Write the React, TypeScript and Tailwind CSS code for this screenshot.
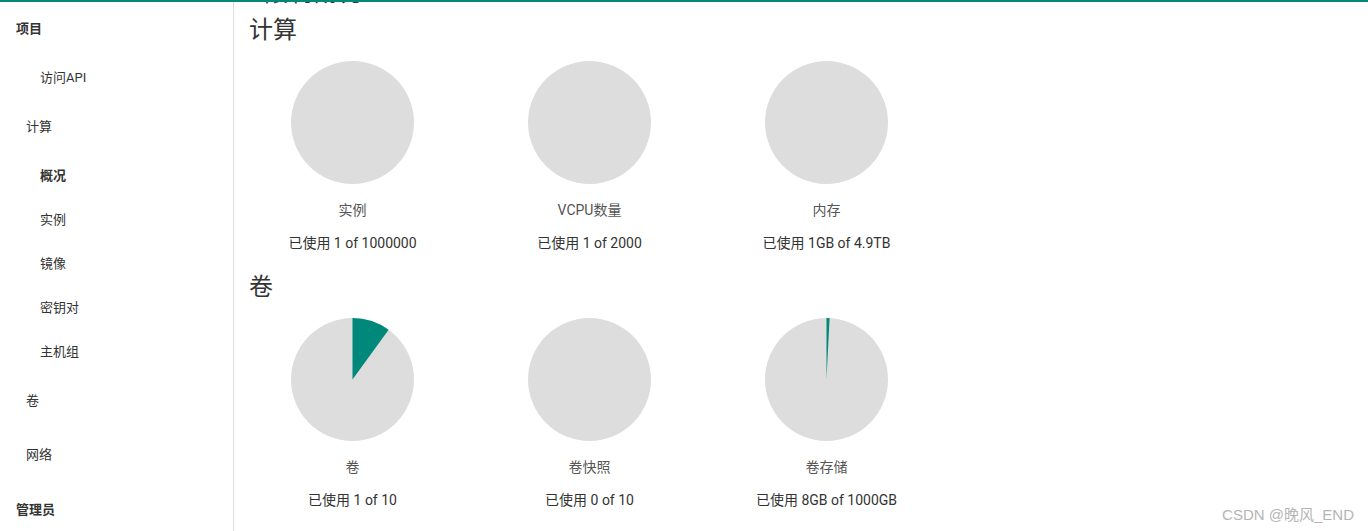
import React from 'react';

type Limit = { label: string; used: number; total: number; text: string };

const compute: Limit[] = [
  { label: '实例', used: 1, total: 1000000, text: '已使用 1 of 1000000' },
  { label: 'VCPU数量', used: 1, total: 2000, text: '已使用 1 of 2000' },
  { label: '内存', used: 1, total: 5017, text: '已使用 1GB of 4.9TB' },
];

const volume: Limit[] = [
  { label: '卷', used: 1, total: 10, text: '已使用 1 of 10' },
  { label: '卷快照', used: 0, total: 10, text: '已使用 0 of 10' },
  { label: '卷存储', used: 8, total: 1000, text: '已使用 8GB of 1000GB' },
];

// tiny usages are not drawn, like the original chart
function Pie({ used, total }: { used: number; total: number }) {
  const r = 61.5;
  const c = 61.5;
  const frac = used / total;
  let wedge: React.ReactNode = null;
  if (frac > 0.001) {
    const a = frac * 2 * Math.PI;
    const x = c + r * Math.sin(a);
    const y = c - r * Math.cos(a);
    const large = frac > 0.5 ? 1 : 0;
    wedge = <path d={`M${c} ${c} L${c} ${c - r} A${r} ${r} 0 ${large} 1 ${x} ${y} Z`} fill="#00897b" />;
  }
  return (
    <svg width="123" height="123" viewBox="0 0 123 123">
      <circle cx={c} cy={c} r={r} fill="#dddddd" />
      {wedge}
    </svg>
  );
}

function Section({ title, items, first }: { title: string; items: Limit[]; first?: boolean }) {
  return (
    <div className={first ? 'mt-[11px]' : 'mt-[23px]'}>
      <h3 className="pl-[15px] text-[24px] leading-[24px] text-[#333]">{title}</h3>
      <div className="grid grid-cols-[237px_237px_237px] mt-[19px]">
        {items.map((it) => (
          <div key={it.label} className="flex flex-col items-center">
            <Pie used={it.used} total={it.total} />
            <div className="mt-[17px] text-[14px] leading-[18px] text-[#555]">{it.label}</div>
            <div className="mt-[15px] text-[14px] leading-[18px] text-[#333]">{it.text}</div>
          </div>
        ))}
      </div>
    </div>
  );
}

const nav = [
  { label: '项目', h: 54, pl: 16, bold: true },
  { label: '访问API', h: 44, pl: 40 },
  { label: '计算', h: 54, pl: 26 },
  { label: '概况', h: 44, pl: 40, bold: true },
  { label: '实例', h: 44, pl: 40 },
  { label: '镜像', h: 44, pl: 40 },
  { label: '密钥对', h: 44, pl: 40 },
  { label: '主机组', h: 44, pl: 40 },
  { label: '卷', h: 54, pl: 26 },
  { label: '网络', h: 54, pl: 26 },
  { label: '管理员', h: 56, pl: 16, bold: true },
];

export default function App() {
  return (
    <div
      className="relative w-[1368px] h-[531px] overflow-hidden bg-white border-t-2 border-[#00897b]"
      style={{ fontFamily: 'Roboto, "Noto Sans CJK SC", sans-serif' }}
    >
      <div className="flex h-full">
        <aside className="w-[234px] shrink-0 border-r border-[#dddddd] text-[13px] text-[#333]">
          {nav.map((n) => (
            <div
              key={n.label}
              className={`flex items-center ${n.bold ? 'font-bold' : ''}`}
              style={{ height: n.h, paddingLeft: n.pl }}
            >
              {n.label}
            </div>
          ))}
        </aside>
        <main className="flex-1 overflow-hidden">
          <div className="h-[5px] overflow-hidden">
            <h2 className="pl-[30px] -mt-[21px] text-[24px] leading-[24px] h-[24px] text-[#333]">限制概况</h2>
          </div>
          <Section title="计算" items={compute} first />
          <Section title="卷" items={volume} />
        </main>
      </div>
      <div
        className="absolute right-[14px] bottom-[7px] text-[15px] leading-[18px] text-[#b5b5b5]"
        style={{ fontFamily: '"Liberation Sans", "Noto Sans CJK SC", sans-serif' }}
      >
        CSDN @晚风_END
      </div>
    </div>
  );
}
